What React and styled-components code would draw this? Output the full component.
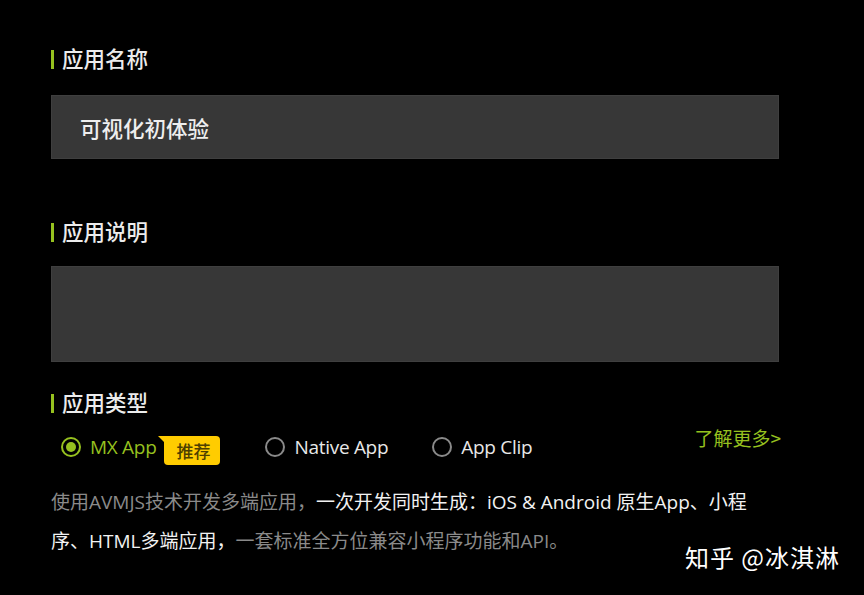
import React from "react";
import styled, { createGlobalStyle } from "styled-components";

const Global = createGlobalStyle`
  html, body { margin: 0; padding: 0; background: #000; }
  body { font-family: "Noto Sans", "Noto Sans CJK SC", sans-serif; }
`;

const GREEN = "#96c11f";

const Page = styled.div`
  position: relative;
  width: 864px;
  height: 595px;
  box-sizing: border-box;
  padding: 45px 0 0 51px;
  background: #000;
  overflow: hidden;
`;

const Form = styled.div`
  width: 728px;
  display: flex;
  flex-direction: column;
`;

const Label = styled.div`
  display: flex;
  align-items: center;
  height: 24px;
  margin-top: ${(p) => p.$mt || 0}px;
  font-family: "Noto Sans CJK SC", sans-serif;
  font-size: 21.5px;
  font-weight: 500;
  color: #ececec;
  &::before {
    content: "";
    width: 3px;
    height: 19px;
    margin-top: 5px;
    background: ${GREEN};
    margin-right: 8px;
  }
`;

const Box = styled.div`
  box-sizing: border-box;
  height: ${(p) => p.$h}px;
  margin-top: ${(p) => p.$mt}px;
  background: #373737;
  border: 1px solid #3f3f3f;
  display: flex;
  align-items: center;
  padding-left: 28px;
  font-family: "Noto Sans CJK SC", sans-serif;
  font-size: 21.5px;
  font-weight: 500;
  color: #eeeeee;
`;

const RadioRow = styled.div`
  display: flex;
  align-items: center;
  height: 30px;
  margin-top: 19px;
  padding-left: 10px;
`;

const Radio = styled.div`
  display: flex;
  align-items: center;
  gap: 9px;
  margin-left: ${(p) => p.$ml || 0}px;
  font-family: "Open Sans", "Noto Sans CJK SC", sans-serif;
  font-size: 19px;
  letter-spacing: -0.3px;
  color: ${(p) => (p.$on ? GREEN : "#e8e8e8")};
`;

const Circle = styled.span`
  box-sizing: border-box;
  width: 20px;
  height: 20px;
  border-radius: 50%;
  border: 2px solid ${(p) => (p.$on ? GREEN : "#8a8a8a")};
  display: flex;
  align-items: center;
  justify-content: center;
  &::after {
    content: "";
    display: ${(p) => (p.$on ? "block" : "none")};
    width: 10px;
    height: 10px;
    border-radius: 50%;
    background: ${GREEN};
  }
`;

const Badge = styled.span`
  position: relative;
  align-self: flex-start;
  margin-top: 4px;
  margin-left: 8px;
  height: 29px;
  padding: 0 10px 0 12px;
  background: #ffcc00;
  border-radius: 0 4px 4px 4px;
  display: flex;
  align-items: center;
  font-family: "Noto Sans CJK SC", sans-serif;
  font-size: 17px;
  font-weight: 500;
  color: #4d3f00;
  &::before {
    content: "";
    position: absolute;
    left: -6px;
    top: 0;
    border-top: 6px solid #ffcc00;
    border-left: 6px solid transparent;
  }
`;

const More = styled.a`
  margin-left: auto;
  margin-right: -2px;
  align-self: flex-start;
  margin-top: -8px;
  font-family: "Noto Sans CJK SC", sans-serif;
  font-size: 19px;
  color: ${GREEN};
  text-decoration: none;
`;

const Desc = styled.p`
  margin: 20px 0 0;
  font-family: "Noto Sans CJK SC", sans-serif;
  font-size: 19px;
  line-height: 38px;
  color: #8a8a8a;
  white-space: nowrap;
`;

const Strong = styled.span`
  color: #f2f2f2;
`;

const Latin = styled.span`
  font-family: "Open Sans", "Noto Sans CJK SC", sans-serif;
`;

const Watermark = styled.div`
  position: absolute;
  right: 24px;
  bottom: 21px;
  font-family: "Noto Sans CJK SC", sans-serif;
  font-size: 24px;
  color: #ffffff;
  letter-spacing: 1px;
`;

export default function App() {
  return (
    <>
      <Global />
      <Page>
        <Form>
          <Label>应用名称</Label>
          <Box $h={64} $mt={26}>可视化初体验</Box>
          <Label $mt={59}>应用说明</Label>
          <Box $h={96} $mt={24} />
          <Label $mt={27}>应用类型</Label>
          <RadioRow>
            <Radio $on>
              <Circle $on />
              <Latin>MX App</Latin>
            </Radio>
            <Badge>推荐</Badge>
            <Radio $ml={45}>
              <Circle />
              <Latin>Native App</Latin>
            </Radio>
            <Radio $ml={44}>
              <Circle />
              <Latin>App Clip</Latin>
            </Radio>
            <More>了解更多&gt;</More>
          </RadioRow>
          <Desc>
            使用<Latin>AVMJS</Latin>技术开发多端应用，
            <Strong>
              一次开发同时生成：<Latin>iOS &amp; Android </Latin>原生<Latin>App</Latin>、小程
            </Strong>
            <br />
            <Strong>
              序、<Latin>HTML</Latin>多端应用，
            </Strong>
            一套标准全方位兼容小程序功能和<Latin>API</Latin>。
          </Desc>
        </Form>
        <Watermark>知乎 @冰淇淋</Watermark>
      </Page>
    </>
  );
}
